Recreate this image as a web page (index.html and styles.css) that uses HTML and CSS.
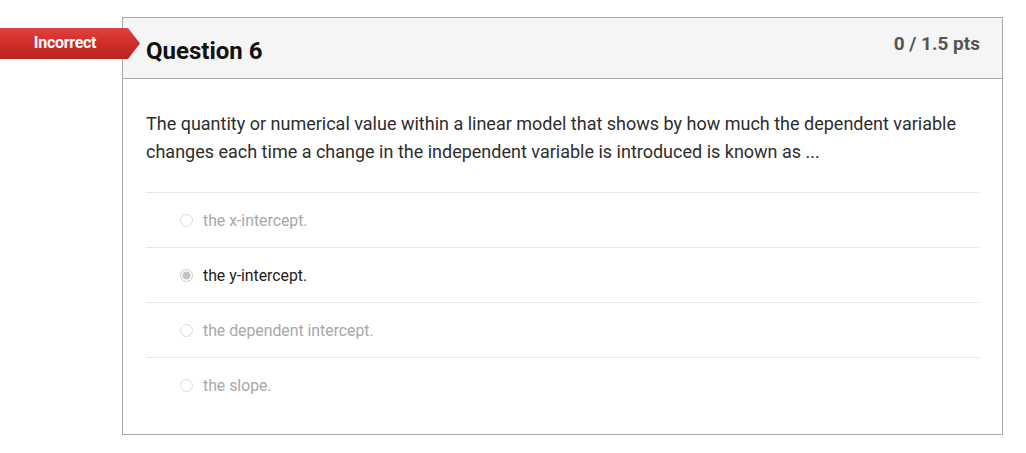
FILE: index.html
```html
<!DOCTYPE html>
<html>
<head>
<meta charset="utf-8">
<link rel="stylesheet" href="styles.css">
</head>
<body>
<div class="page">
  <div class="badge">Incorrect</div>
  <div class="card">
    <div class="card-header">
      <h2 class="title">Question 6</h2>
      <div class="pts">0 / 1.5 pts</div>
    </div>
    <div class="card-body">
      <p class="question">The quantity or numerical value within a linear model that shows by how much the dependent variable changes each time a change in the independent variable is introduced is known as ...</p>
      <div class="answers">
        <div class="answer"><span class="radio"></span><span class="label">the x-intercept.</span></div>
        <div class="answer selected"><span class="radio"></span><span class="label">the y-intercept.</span></div>
        <div class="answer"><span class="radio"></span><span class="label">the dependent intercept.</span></div>
        <div class="answer"><span class="radio"></span><span class="label">the slope.</span></div>
      </div>
    </div>
  </div>
</div>
</body>
</html>
```

FILE: styles.css
```css
html, body {
  margin: 0;
  padding: 0;
  background: #fff;
  font-family: Roboto, "Liberation Sans", Arial, sans-serif;
  color: #2d3b45;
}

.page {
  position: relative;
  padding: 17px 0 0 122px;
}

.badge {
  position: absolute;
  left: 0;
  top: 28px;
  width: 140px;
  height: 31px;
  box-sizing: border-box;
  padding-right: 10px;
  background: linear-gradient(to bottom, #e2413d 0%, #c92b27 60%, #b82420 100%);
  clip-path: polygon(0 0, 128px 0, 140px 50%, 128px 100%, 0 100%);
  color: #fff;
  font-weight: 700;
  font-size: 16px;
  line-height: 29px;
  text-align: center;
  letter-spacing: -0.3px;
}

.card {
  width: 881px;
  height: 418px;
  box-sizing: border-box;
  border: 1px solid #aaaaaa;
}

.card-header {
  display: flex;
  justify-content: space-between;
  align-items: flex-start;
  background: #f5f5f5;
  border-bottom: 1px solid #aaaaaa;
  height: 61px;
  box-sizing: border-box;
  padding: 0 22px 0 23px;
}

.title {
  margin: 19px 0 0 0;
  font-size: 24px;
  font-weight: 700;
  line-height: 28px;
  color: #111;
}

.pts {
  margin-top: 15px;
  font-size: 19px;
  font-weight: 700;
  line-height: 22px;
  color: #555;
}

.card-body {
  padding: 31px 23px 0 23px;
}

.question {
  margin: 0 0 26px 0;
  font-size: 18px;
  line-height: 28px;
  color: #2d2d2d;
}

.answer {
  display: flex;
  align-items: center;
  height: 54px;
  border-top: 1px solid #e6e6e6;
  padding-left: 34px;
}

.radio {
  width: 13px;
  height: 13px;
  box-sizing: border-box;
  border: 1px solid #dcdcdc;
  border-radius: 50%;
  background: #fff;
  margin-right: 10px;
}

.selected .radio {
  border-color: #c8c8c8;
  background: radial-gradient(circle, #c4c4c4 0 3.8px, #fff 4.3px);
}

.label {
  font-size: 15.8px;
  color: #a8a8a8;
}

.selected .label {
  color: #222;
}
```
